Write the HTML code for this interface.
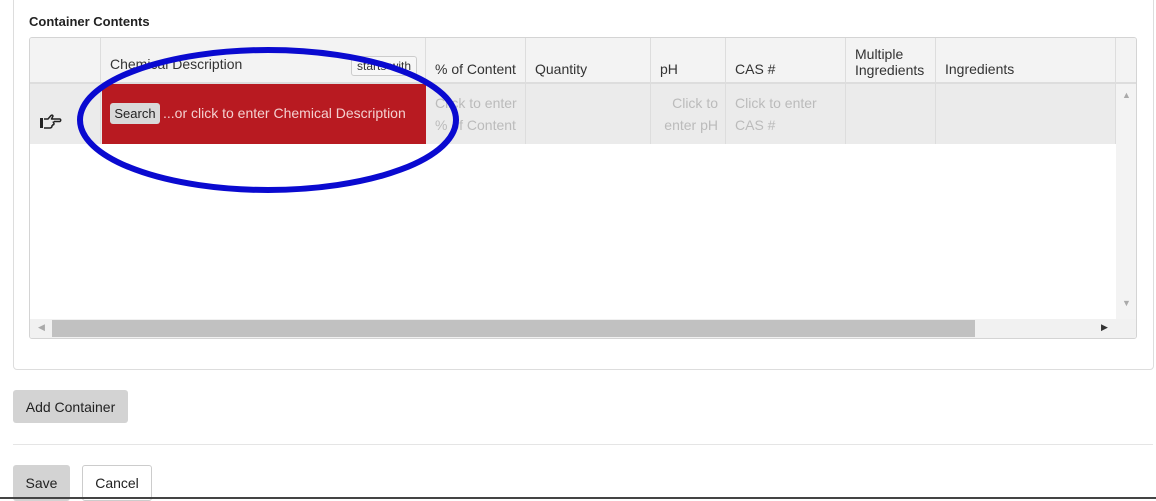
<!DOCTYPE html>
<html><head><style>
*{box-sizing:border-box;margin:0;padding:0}
body{width:1156px;height:499px;overflow:hidden;background:#fff;font-family:"Liberation Sans",Arial,sans-serif;font-size:14px;color:#333;position:relative}
.abs{position:absolute}
.panel{left:13px;top:-5px;width:1141px;height:375px;border:1px solid #ddd;border-radius:4px}
.title{left:29px;top:14px;font-weight:bold;font-size:13px;color:#222}
.grid{left:29px;top:37px;width:1108px;height:302px;border:1px solid #d4d4d4;border-radius:3px;overflow:hidden;background:#fff}
.hdr{left:0;top:0;width:1108px;height:46px;background:#f3f3f3;border-bottom:2px solid #ddd}
.col{position:absolute;top:0;height:100%;border-right:1px solid #ddd}
.ht{position:absolute;font-size:14px;color:#333}
.row{left:0;top:46px;width:1085px;height:60px;background:#ebebeb}
.ph{position:absolute;color:#bbb;font-size:14px;line-height:22px}
.btn{border-radius:3px;font-size:14px;color:#222;display:flex;align-items:center;justify-content:center}
</style></head><body>
<div class="abs panel"></div>
<div class="abs title">Container Contents</div>
<div class="abs grid">
  <div class="abs hdr">
    <div class="col" style="left:0;width:71px"></div>
    <div class="col" style="left:71px;width:325px"></div>
    <div class="col" style="left:396px;width:100px"></div>
    <div class="col" style="left:496px;width:125px"></div>
    <div class="col" style="left:621px;width:75px"></div>
    <div class="col" style="left:696px;width:120px"></div>
    <div class="col" style="left:816px;width:90px"></div>
    <div class="col" style="left:906px;width:180px"></div>
    <div class="ht" style="left:80px;top:18px">Chemical Description</div>
    <div class="ht" style="left:321px;top:18px;width:66px;height:20px;border:1px solid #ccc;border-radius:3px;background:#f7f7f7;font-size:12px;text-align:center;line-height:18px">starts with</div>
    <div class="ht" style="left:405px;top:23px">% of Content</div>
    <div class="ht" style="left:505px;top:23px">Quantity</div>
    <div class="ht" style="left:630px;top:23px">pH</div>
    <div class="ht" style="left:705px;top:23px">CAS #</div>
    <div class="ht" style="left:825px;top:8px;line-height:16px">Multiple<br>Ingredients</div>
    <div class="ht" style="left:915px;top:23px">Ingredients</div>
  </div>
  <div class="abs row">
    <div class="col" style="left:0;width:71px"></div>
    <div class="col" style="left:396px;width:100px"></div>
    <div class="col" style="left:496px;width:125px"></div>
    <div class="col" style="left:621px;width:75px"></div>
    <div class="col" style="left:696px;width:120px"></div>
    <div class="col" style="left:816px;width:90px"></div>
    <div class="col" style="left:906px;width:180px"></div>
    <svg class="abs" style="left:9px;top:30px" width="24" height="16" viewBox="0 0 24 16">
      <rect x="1" y="4" width="3" height="10" fill="#222"/>
      <path d="M5 5 L9 5 L12 1.5 Q13.5 0.5 14 2 L12.5 5 L21 5 Q22.5 6 21 7.5 L15 7.5 M14 7.5 L15 9.5 Q15 11 13.5 11 L13 11 M13 11 Q13.5 13.5 11 14 L5 14" fill="none" stroke="#222" stroke-width="1.5" stroke-linejoin="round"/>
    </svg>
    <div class="abs" style="left:72px;top:0;width:324px;height:60px;background:#b81a21"></div>
    <div class="abs btn" style="left:80px;top:19px;width:50px;height:21px;background:#d9d9d9;font-size:13px">Search</div>
    <div class="abs" style="left:133px;top:21px;color:#f3d0d0;font-size:14px">...or click to enter Chemical Description</div>
    <div class="ph" style="left:405px;top:8px">Click to enter<br>% of Content</div>
    <div class="ph" style="left:621px;top:8px;width:67px;text-align:right">Click to<br>enter pH</div>
    <div class="ph" style="left:705px;top:8px">Click to enter<br>CAS #</div>
  </div>
  <div class="abs" style="left:1086px;top:46px;width:22px;height:235px;background:#f3f3f3"></div>
  <div class="abs" style="left:1092px;top:52px;font-size:9px;color:#aaa">▲</div>
  <div class="abs" style="left:1092px;top:260px;font-size:9px;color:#aaa">▼</div>
  <div class="abs" style="left:0;top:281px;width:1108px;height:21px;background:#f1f1f1"></div>
  <div class="abs" style="left:22px;top:282px;width:923px;height:17px;background:#c1c1c1"></div>
  <div class="abs" style="left:8px;top:284px;font-size:9px;color:#aaa">◀</div>
  <div class="abs" style="left:1071px;top:284px;font-size:9px;color:#333">▶</div>
</div>
<svg class="abs" style="left:0;top:0" width="1156" height="499"><ellipse cx="268" cy="120" rx="188" ry="70" fill="none" stroke="#0a0ad0" stroke-width="6"/></svg>
<div class="abs btn" style="left:13px;top:390px;width:115px;height:33px;background:#d3d3d3">Add Container</div>
<div class="abs" style="left:13px;top:444px;width:1140px;height:1px;background:#e5e5e5"></div>
<div class="abs btn" style="left:13px;top:465px;width:57px;height:36px;background:#d3d3d3">Save</div>
<div class="abs btn" style="left:82px;top:465px;width:70px;height:36px;background:#fff;border:1px solid #ccc">Cancel</div>
<div class="abs" style="left:0;top:497px;width:1156px;height:2px;background:#444"></div>
</body></html>
